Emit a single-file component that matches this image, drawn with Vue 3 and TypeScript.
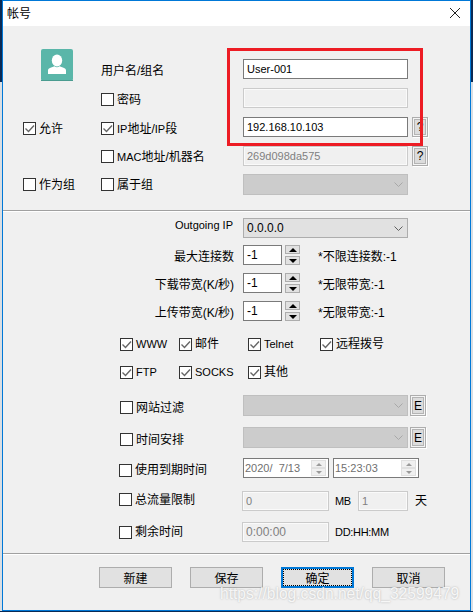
<script setup lang="ts">
const limits = [
  { label: '最大连接数', value: '-1', hint: '*不限连接数:-1' },
  { label: '下载带宽(K/秒)', value: '-1', hint: '*无限带宽:-1' },
  { label: '上传带宽(K/秒)', value: '-1', hint: '*无限带宽:-1' },
]
const protocols = [
  { label: 'WWW', cls: 'c1 lat' },
  { label: '邮件', cls: 'c2' },
  { label: 'Telnet', cls: 'c3 lat' },
  { label: '远程拨号', cls: 'c4' },
  { label: 'FTP', cls: 'c1 lat' },
  { label: 'SOCKS', cls: 'c2 lat' },
  { label: '其他', cls: 'c3' },
]
const actions = ['新建', '保存', '确定', '取消']
</script>

<template>
  <div class="desk">
    <div class="win">
      <header class="title">
        <span>帐号</span>
        <svg class="close" width="10" height="10" viewBox="0 0 10 10"><path d="M0 0L10 10M10 0L0 10" stroke="#222" stroke-width="1" fill="none" /></svg>
      </header>

      <section class="top">
        <div class="avatar">
          <svg width="32" height="32" viewBox="0 0 32 32">
            <rect width="32" height="32" rx="2" fill="#5ab6a9" />
            <rect y="31" width="32" height="1" fill="#4a9c90" />
            <ellipse cx="16" cy="11.5" rx="5.2" ry="6" fill="#fff" />
            <path d="M7 25v-3.5c0-1.5 1-2.300 2.500-2.800l4-1.400c1.500 1.300 3.500 1.300 5 0l4 1.400c1.500 .5 2.500 1.300 2.500 2.800V25z" fill="#fff" />
          </svg>
        </div>
        <div class="lbl r1 b down2">用户名/组名</div>
        <input class="field r1 i" value="User-001" readonly />

        <label class="chk r2 b down2"><span class="box" />密码</label>
        <input class="field off r2 i" disabled />

        <label class="chk r3 a down2"><span class="box"><svg class="tick" viewBox="0 0 11 11"><path d="M1.500 5.500L4.500 8.500L10 2.500" /></svg></span>允许</label>
        <label class="chk r3 b down2"><span class="box"><svg class="tick" viewBox="0 0 11 11"><path d="M1.500 5.500L4.500 8.500L10 2.500" /></svg></span><span><small>IP</small>地址/<small>IP</small>段</span></label>
        <input class="field r3 i ip" value="192.168.10.103" readonly />
        <button class="ask r3 q">?</button>

        <label class="chk r4 b"><span class="box" /><span><small>MAC</small>地址/机器名</span></label>
        <input class="field off r4 i" value="269d098da575" disabled />
        <button class="ask r4 q">?</button>

        <label class="chk r5 a up2"><span class="box" />作为组</label>
        <label class="chk r5 b up2"><span class="box" />属于组</label>
        <div class="combo off r5 i wide"><svg class="chev" width="9" height="5" viewBox="0 0 9 5"><path d="M.5 .5L4.500 4.500L8.500 .5" /></svg></div>
      </section>

      <hr class="rule" />

      <section class="limits">
        <div class="out-lbl">Outgoing IP</div>
        <div class="combo"><span>0.0.0.0</span><svg class="chev" width="9" height="5" viewBox="0 0 9 5"><path d="M.5 .5L4.500 4.500L8.500 .5" /></svg></div>
        <template v-for="row in limits" :key="row.label">
          <div class="lim-lbl">{{ row.label }}</div>
          <div class="lim-ctl">
            <input class="field num" :value="row.value" readonly />
            <div class="spin">
              <span class="sb"><i class="up" /></span>
              <span class="sb"><i class="down" /></span>
            </div>
            <span class="hint">{{ row.hint }}</span>
          </div>
        </template>
      </section>

      <section class="protos">
        <label v-for="p in protocols" :key="p.label" class="chk" :class="p.cls">
          <span class="box"><svg class="tick" viewBox="0 0 11 11"><path d="M1.500 5.500L4.500 8.500L10 2.500" /></svg></span>{{ p.label }}
        </label>
      </section>

      <section class="misc">
        <label class="chk shift low"><span class="box" />网站过滤</label>
        <div class="pair">
          <div class="combo off tall"><svg class="chev" width="9" height="5" viewBox="0 0 9 5"><path d="M.5 .5L4.500 4.500L8.500 .5" /></svg></div>
          <button class="ask e">E</button>
        </div>

        <label class="chk shift low"><span class="box" />时间安排</label>
        <div class="pair">
          <div class="combo off tall"><svg class="chev" width="9" height="5" viewBox="0 0 9 5"><path d="M.5 .5L4.500 4.500L8.500 .5" /></svg></div>
          <button class="ask e">E</button>
        </div>

        <label class="chk low"><span class="box" />使用到期时间</label>
        <div class="dates">
          <div class="dt grey">2020/&nbsp; 7/13<span class="mini"><span class="sb"><i class="up g" /></span><span class="sb"><i class="down g" /></span></span></div>
          <div class="dt grey">15:23:03<span class="mini"><span class="sb"><i class="up g" /></span><span class="sb"><i class="down g" /></span></span></div>
        </div>

        <label class="chk high"><span class="box" />总流量限制</label>
        <div class="quota">
          <input class="field off q1" value="0" disabled />
          <span class="mb">MB</span>
          <input class="field off q2" value="1" disabled />
          <span class="day">天</span>
        </div>

        <label class="chk"><span class="box" />剩余时间</label>
        <div class="quota">
          <input class="field off q1 t12" value="0:00:00" disabled />
          <span class="mb">DD:HH:MM</span>
        </div>
      </section>

      <hr class="rule bottom" />

      <footer class="actions">
        <button v-for="a in actions" :key="a" class="act" :class="{ def: a === '确定' }"><span>{{ a }}</span></button>
      </footer>
    </div>

    <div class="mark" aria-hidden="true" />
    <div class="wm">https://blog.csdn.net/qq_32599479</div>
  </div>
</template>

<style scoped>
.desk {
  position: relative;
  width: 473px;
  height: 612px;
  overflow: hidden;
  background: linear-gradient(#0a2a55 0 82px, #d9dee3 82px 611px, #0a2a55 611px);
  font: 12px/16px "Liberation Sans", "Noto Sans CJK SC", sans-serif;
  color: #000;
}
small { font-size: 11px; }
.lat { font-size: 11px; }
.win {
  box-sizing: border-box;
  width: 469px;
  height: 611px;
  margin-left: 2px;
  border: 1px solid #0078d7;
  background: #f0f0f0;
}
.title {
  height: 25px;
  background: #fff;
  display: flex;
  align-items: center;
  justify-content: space-between;
  padding: 0 10px 0 4px;
  box-sizing: border-box;
}
.close { margin-bottom: 1px; }

.top {
  display: grid;
  grid-template-columns: 78px 142px 165px 16px;
  grid-auto-rows: 29px;
  padding: 29px 0 0 20px;
  height: 155px;
  box-sizing: content-box;
  align-items: center;
}
.r1 { grid-row: 1; }
.r2 { grid-row: 2; }
.r3 { grid-row: 3; }
.r4 { grid-row: 4; }
.r5 { grid-row: 5; }
.a { grid-column: 1; }
.b { grid-column: 2; }
.down2 { margin-top: 2px; }
.up2 { margin-bottom: 2px; }
.top .i { grid-column: 3; align-self: start; margin-top: 4px; width: 165px; }
.top .q { grid-column: 4; justify-self: end; align-self: start; margin-top: 4px; margin-right: -4px; }
.top .wide { margin-top: 3px; height: 21px; }
.avatar {
  grid-row: 1;
  grid-column: 1;
  align-self: start;
  margin: -6px 0 0 18px;
  height: 32px;
}
.avatar svg { display: block; }

.chk {
  display: flex;
  align-items: center;
  gap: 3px;
  white-space: nowrap;
}
.box {
  box-sizing: border-box;
  width: 13px;
  height: 13px;
  border: 1px solid #333;
  background: #fff;
  flex: none;
  display: block;
}
.tick {
  display: block;
  width: 11px;
  height: 11px;
  fill: none;
  stroke: #666;
  stroke-width: 1.400;
}

.field {
  box-sizing: border-box;
  height: 20px;
  border: 1px solid #7a7a7a;
  background: #fff;
  padding: 0 0 0 3px;
  margin: 0;
  font: 11px/16px "Liberation Sans", "Noto Sans CJK SC", sans-serif;
  color: #000;
  outline: none;
  border-radius: 0;
}
.field.off {
  background: #f0f0f0;
  border-color: #cbcbcb;
  box-shadow: inset 0 0 0 1px #fafafa;
  color: #808080;
}
.field.t12 { font-size: 12px; }
.combo {
  box-sizing: border-box;
  height: 20px;
  width: 165px;
  background: #e1e1e1;
  border: 1px solid #adadad;
  display: flex;
  align-items: center;
  justify-content: space-between;
  padding: 0 4px 0 3px;
}
.combo.off {
  background: #cccccc;
  border-color: #bfbfbf;
  justify-content: flex-end;
}
.chev { fill: none; stroke: #606060; stroke-width: 1; }
.off .chev { stroke: #a8a8a8; }

.ask {
  box-sizing: border-box;
  width: 16px;
  height: 20px;
  padding: 0;
  border: 1px solid #adadad;
  background: #dcdcdc;
  box-shadow: inset 0 0 0 1px #f4f4f4, inset 0 0 0 2px #b4b4b4, 1px 1px 0 #fff;
  font: 12px/16px "Liberation Sans", sans-serif;
  color: #000;
}

.rule {
  height: 1px;
  margin: 0;
  border: 0;
  background: #a0a0a0;
  border-bottom: 1px solid #fff;
  box-sizing: content-box;
}

.limits {
  display: grid;
  grid-template-columns: 231px 1fr;
  column-gap: 9px;
  grid-template-rows: 20px 28px 28px 28px;
  padding-top: 6px;
  align-items: center;
}
.out-lbl { text-align: right; padding-right: 1px; margin-top: -6px; font-size: 11px; }
.lim-lbl { text-align: right; padding-top: 9px; }
.lim-ctl {
  display: flex;
  align-items: center;
  padding-top: 6px;
  height: 28px;
  box-sizing: border-box;
}
.field.num { width: 39px; font-size: 12px; }
.spin {
  margin-left: 3px;
  display: flex;
  flex-direction: column;
  gap: 2px;
}
.sb {
  box-sizing: border-box;
  width: 15px;
  height: 9px;
  background: #e1e1e1;
  border: 1px solid #adadad;
  display: flex;
  align-items: center;
  justify-content: center;
}
.up, .down {
  width: 0;
  height: 0;
  border-left: 4px solid transparent;
  border-right: 4px solid transparent;
}
.up { border-bottom: 4px solid #000; }
.down { border-top: 4px solid #000; }
.up.g { border-bottom-color: #9a9a9a; border-left-width: 3px; border-right-width: 3px; border-bottom-width: 3px; }
.down.g { border-top-color: #9a9a9a; border-left-width: 3px; border-right-width: 3px; border-top-width: 3px; }
.hint { margin: 3px 0 0 18px; }

.protos {
  display: grid;
  grid-template-columns: 59px 69px 72px auto;
  grid-auto-rows: 28px;
  padding: 8px 0 0 117px;
  align-items: center;
}
.c1 { grid-column: 1; }
.c2 { grid-column: 2; }
.c3 { grid-column: 3; }
.c4 { grid-column: 4; }

.misc {
  display: grid;
  grid-template-columns: 124px 1fr;
  grid-template-rows: 31px 33px 28px 38px 24px;
  padding: 4px 0 0 116px;
  align-items: center;
}
.shift { margin-left: 1px; }
.low { margin-top: 4px; }
.high { margin-bottom: 3px; }
.pair { display: flex; align-items: center; gap: 2px; }
.tall { height: 21px; }
.e { width: 16px; height: 21px; }
.dates { display: flex; gap: 4px; }
.dt {
  box-sizing: border-box;
  width: 86px;
  height: 20px;
  background: #fff;
  border: 1px solid #7a7a7a;
  display: flex;
  align-items: center;
  justify-content: space-between;
  padding: 0 2px 0 1px;
  font-size: 11px;
}
.grey { color: #707070; }
.mini { display: flex; flex-direction: column; }
.mini .sb { height: 8px; width: 15px; background: #f0f0f0; border-color: #e0e0e0; }
.quota { display: flex; align-items: center; margin-left: -1px; }
.q1 { width: 87px; }
.q2 { width: 50px; margin-left: 7px; }
.mb { margin-left: 6px; letter-spacing: -0.3px; font-size: 11px; }
.day { margin-left: 7px; }

.bottom { margin-top: 9px; }
.actions {
  display: flex;
  gap: 18px;
  padding: 12px 0 0 96px;
}
.act {
  box-sizing: border-box;
  width: 73px;
  height: 21px;
  padding: 0;
  background: #e1e1e1;
  border: 1px solid #adadad;
  font: 12px/16px "Noto Sans CJK SC", sans-serif;
  color: #000;
}
.act.def {
  border: 2px solid #0078d7;
  padding: 1px;
}
.act.def span {
  display: block;
  height: 15px;
  outline: 1px dotted #000;
  line-height: 15px;
}

.mark {
  position: absolute;
  left: 227px;
  top: 48px;
  width: 196px;
  height: 98px;
  box-sizing: border-box;
  border: 3px solid #ed1c24;
  pointer-events: none;
}
.wm {
  position: absolute;
  left: 220px;
  top: 584px;
  font: 15.6px/20px "Liberation Sans", sans-serif;
  color: rgba(255, 255, 255, 0.85);
  text-shadow: 0 0 2px rgba(120, 120, 120, 0.55);
  white-space: nowrap;
  pointer-events: none;
}
</style>
